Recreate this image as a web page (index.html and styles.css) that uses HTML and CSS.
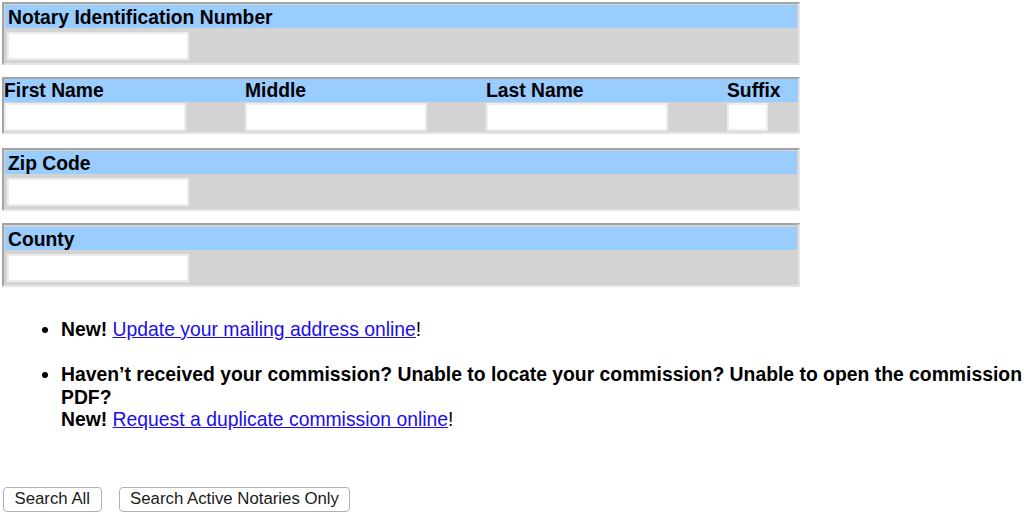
FILE: index.html
```html
<!DOCTYPE html>
<html>
<head>
<meta charset="utf-8">
<link rel="stylesheet" href="styles.css">
</head>
<body>
<div class="box">
  <div class="hdr">Notary Identification Number</div>
  <div class="row"><input class="fld" type="text"></div>
</div>

<div class="box names">
  <div class="ncols">
    <div class="ncol"><div class="nhdr">First Name</div><div class="ncell"><input class="fld" type="text"></div></div>
    <div class="ncol"><div class="nhdr">Middle</div><div class="ncell"><input class="fld" type="text"></div></div>
    <div class="ncol"><div class="nhdr">Last Name</div><div class="ncell"><input class="fld" type="text"></div></div>
    <div class="ncol last"><div class="nhdr">Suffix</div><div class="ncell"><input class="fld small" type="text"></div></div>
  </div>
</div>

<div class="box">
  <div class="hdr">Zip Code</div>
  <div class="row"><input class="fld" type="text"></div>
</div>

<div class="box county">
  <div class="hdr">County</div>
  <div class="row"><input class="fld" type="text"></div>
</div>

<ul class="notes">
  <li>New! <a href="#">Update your mailing address online</a><span class="plain">!</span></li>
  <li>Haven’t received your commission? Unable to locate your commission? Unable to open the commission PDF?<br>New! <a href="#">Request a duplicate commission online</a><span class="plain">!</span></li>
</ul>

<div class="buttons">
  <button class="btn" type="button">Search All</button>
  <button class="btn" type="button">Search Active Notaries Only</button>
</div>
</body>
</html>
```

FILE: styles.css
```css
html, body {
  margin: 0;
  background: #ffffff;
}
body {
  padding: 2px 0 0 2px;
  font-family: "Liberation Sans", Arial, sans-serif;
  color: #000;
  overflow: hidden;
}
.box {
  width: 798px;
  box-sizing: border-box;
  border: 2px solid;
  border-color: #a4a4a4 #e4e4e4 #e4e4e4 #a4a4a4;
  background: #d3d3d3;
  padding: 1px 1px 2px 1px;
  margin-bottom: 12px;
}
.hdr {
  background: #99ccff;
  height: 23px;
  line-height: 25px;
  font-size: 19.3px;
  font-weight: bold;
  padding-left: 3px;
}
.row {
  padding: 4px 0 1px 2px;
  display: flex;
}
.fld {
  display: block;
  box-sizing: border-box;
  width: 182px;
  height: 28px;
  margin: 0;
  border: 2px solid #ececec;
  background: #ffffff;
  padding: 0;
  font: 16px "Liberation Sans", Arial, sans-serif;
}
.fld.small {
  width: 41px;
}
.box.names {
  padding: 0;
  margin-bottom: 14px;
  margin-top: 2px;
}
.ncols {
  display: flex;
}
.ncol {
  width: 241px;
  display: flex;
  flex-direction: column;
}
.ncol.last {
  flex: 1;
  width: auto;
}
.nhdr {
  background: #99ccff;
  height: 23px;
  line-height: 24px;
  font-size: 19.3px;
  font-weight: bold;
}
.ncell {
  padding: 1px 0 1px 0;
  height: 28px;
}
.box.county {
  padding-top: 2px;
}
.notes {
  margin: 31px 0 0 0;
  padding: 0 0 0 59px;
  font-size: 19.35px;
  font-weight: bold;
  line-height: 22.5px;
}
.notes li + li {
  margin-top: 22.5px;
}
.notes a {
  color: #1a0dee;
  font-weight: normal;
  text-decoration: underline;
}
.plain {
  font-weight: normal;
}
.buttons {
  display: flex;
  gap: 17px;
  margin-top: 56px;
  padding-left: 1px;
}
.btn {
  height: 25px;
  padding: 0 10.5px;
  border: 1px solid #b2b2b2;
  border-radius: 4px;
  background: #ffffff;
  font: 16.8px "Liberation Sans", Arial, sans-serif;
  color: #1a1a1a;
  line-height: 22px;
}
```
